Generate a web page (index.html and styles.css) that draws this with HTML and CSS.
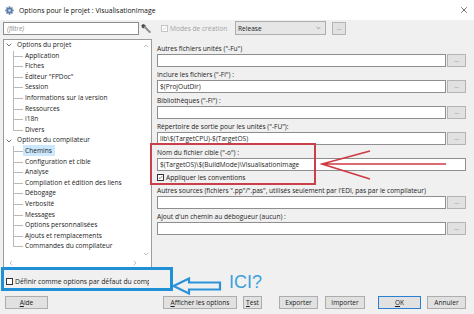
FILE: index.html
```html
<!DOCTYPE html>
<html lang="fr">
<head>
<meta charset="utf-8">
<title>Options pour le projet : VisualisationImage</title>
<link rel="stylesheet" href="styles.css">
</head>
<body>
<div class="dialog">
  <header class="titlebar">
    <svg class="gear" viewBox="0 0 10 10">
      <g fill="#5b7ea8">
        <rect x="4.1" y="0.3" width="1.8" height="9.4"/>
        <rect x="4.1" y="0.3" width="1.8" height="9.4" transform="rotate(45 5 5)"/>
        <rect x="4.1" y="0.3" width="1.8" height="9.4" transform="rotate(90 5 5)"/>
        <rect x="4.1" y="0.3" width="1.8" height="9.4" transform="rotate(135 5 5)"/>
        <circle cx="5" cy="5" r="3.4"/>
      </g>
      <circle cx="5" cy="5" r="1.5" fill="#c9d7e8"/>
    </svg>
    <span class="title">Options pour le projet : VisualisationImage</span>
    <svg class="close" viewBox="0 0 6 6"><path d="M0.3 0.3 L5.7 5.7 M5.7 0.3 L0.3 5.7" stroke="#333" stroke-width="0.7" fill="none"/></svg>
  </header>

  <div class="main">
    <aside class="left">
      <div class="filter">
        <div class="filter-input">(filtre)</div>
        <div class="filter-btn">
          <svg viewBox="0 0 12 12" class="brush">
            <path d="M1.5 3.2 C1.5 1.6 3.6 1 5 1.8 L6.6 3.4 L4 6 L2.2 4.6 Z" fill="#4a4a4a"/>
            <path d="M5.2 4.4 L10.6 9.8" stroke="#8e8e8e" stroke-width="2.2" stroke-linecap="round"/>
          </svg>
        </div>
      </div>

      <div class="tree">
        <div class="tree-list">
          <div class="parent"><svg class="chev" viewBox="0 0 6 4"><path d="M0.6 0.6 L3 3 L5.4 0.6" stroke="#555" stroke-width="0.8" fill="none"/></svg>Options du projet</div>
          <ul class="children">
            <li>Application</li>
            <li>Fiches</li>
            <li>Éditeur "FPDoc"</li>
            <li>Session</li>
            <li>Informations sur la version</li>
            <li>Ressources</li>
            <li>i18n</li>
            <li>Divers</li>
          </ul>
          <div class="parent"><svg class="chev" viewBox="0 0 6 4"><path d="M0.6 0.6 L3 3 L5.4 0.6" stroke="#555" stroke-width="0.8" fill="none"/></svg>Options du compilateur</div>
          <ul class="children">
            <li><span class="selected">Chemins</span></li>
            <li>Configuration et cible</li>
            <li>Analyse</li>
            <li>Compilation et édition des liens</li>
            <li>Débogage</li>
            <li>Verbosité</li>
            <li>Messages</li>
            <li>Options personnalisées</li>
            <li>Ajouts et remplacements</li>
            <li>Commandes du compilateur</li>
          </ul>
        </div>
        <div class="vscroll">
          <svg viewBox="0 0 6 4"><path d="M0.8 3.2 L3 1 L5.2 3.2" stroke="#b4b4b4" stroke-width="0.8" fill="none"/></svg>
          <svg viewBox="0 0 6 4"><path d="M0.8 0.8 L3 3 L5.2 0.8" stroke="#b4b4b4" stroke-width="0.8" fill="none"/></svg>
        </div>
        <div class="hscroll">
          <svg viewBox="0 0 4 6"><path d="M3.2 0.8 L1 3 L3.2 5.2" stroke="#b4b4b4" stroke-width="0.8" fill="none"/></svg>
          <svg viewBox="0 0 4 6"><path d="M0.8 0.8 L3 3 L0.8 5.2" stroke="#b4b4b4" stroke-width="0.8" fill="none"/></svg>
        </div>
      </div>

      <div class="default-row">
        <span class="cb"></span>
        <span class="default-text">Définir comme options par défaut du compilateur</span>
      </div>
    </aside>

    <section class="right">
      <div class="modes">
        <span class="cb cb-disabled"><svg viewBox="0 0 7 7"><path d="M1.3 3.6 L2.9 5.1 L5.8 1.6" stroke="#b8b8b8" stroke-width="0.8" fill="none"/></svg></span>
        <span class="modes-label">Modes de création</span>
        <div class="combo">
          <span>Release</span>
          <svg viewBox="0 0 6 4"><path d="M0.8 0.8 L3 3 L5.2 0.8" stroke="#777" stroke-width="0.8" fill="none"/></svg>
        </div>
        <div class="dots-btn modes-btn">...</div>
      </div>

      <div class="field">
        <div class="label">Autres fichiers unités ("-Fu")</div>
        <div class="input-row"><div class="input"></div><div class="dots-btn">...</div></div>
      </div>
      <div class="field">
        <div class="label">Inclure les fichiers ("-Fi") :</div>
        <div class="input-row"><div class="input">$(ProjOutDir)</div><div class="dots-btn">...</div></div>
      </div>
      <div class="field">
        <div class="label">Bibliothèques ("-Fl") :</div>
        <div class="input-row"><div class="input"></div><div class="dots-btn">...</div></div>
      </div>
      <div class="field">
        <div class="label">Répertoire de sortie pour les unités ("-FU"):</div>
        <div class="input-row"><div class="input">lib\$(TargetCPU)-$(TargetOS)</div><div class="dots-btn">...</div></div>
      </div>
      <div class="field">
        <div class="label">Nom du fichier cible ("-o") :</div>
        <div class="input-row"><div class="input">$(TargetOS)\$(BuildMode)\VisualisationImage</div></div>
        <div class="check-row">
          <span class="cb"><svg viewBox="0 0 7 7"><path d="M1.3 3.6 L2.9 5.1 L5.8 1.6" stroke="#222" stroke-width="0.8" fill="none"/></svg></span>
          <span>Appliquer les conventions</span>
        </div>
      </div>
      <div class="field">
        <div class="label">Autres sources (fichiers ".pp"/".pas", utilisés seulement par l'EDI, pas par le compilateur)</div>
        <div class="input-row"><div class="input"></div><div class="dots-btn">...</div></div>
      </div>
      <div class="field">
        <div class="label">Ajout d'un chemin au débogueur (aucun) :</div>
        <div class="input-row"><div class="input"></div><div class="dots-btn">...</div></div>
      </div>
    </section>
  </div>

  <footer class="buttons">
    <div class="btn btn-aide"><u>A</u>ide</div>
    <div class="btn btn-afficher"><u>A</u>fficher les options</div>
    <div class="btn btn-test"><u>T</u>est</div>
    <div class="btn btn-exporter">Exporter</div>
    <div class="btn btn-importer">Importer</div>
    <div class="btn btn-ok"><u>O</u>K</div>
    <div class="btn btn-annuler">Annuler</div>
  </footer>
</div>

<div class="red-box"></div>
<svg class="red-arrow" viewBox="0 0 128 32">
  <path d="M50 2 L2 15 L50 30 M2 15 L126 15" stroke="#cf3a44" stroke-width="1.6" fill="none"/>
</svg>
<div class="blue-box"></div>
<svg class="blue-arrow" viewBox="0 0 50 18">
  <path d="M1.5 9 L17 1.5 L17 5.5 L48 5.5 L48 12.5 L17 12.5 L17 16.5 Z" stroke="#2a93d8" stroke-width="2.2" fill="none" stroke-linejoin="miter"/>
</svg>
<div class="ici">ICI?</div>
</body>
</html>
```

FILE: styles.css
```css
* {
  box-sizing: border-box;
  margin: 0;
  padding: 0;
}

html, body {
  width: 474px;
  height: 314px;
}

body {
  position: relative;
  overflow: hidden;
  background: #f0f0f0;
  color: #1c1c1c;
  font-family: "Open Sans", "Noto Sans", sans-serif;
  font-size: 6.6px;
}

.dialog {
  display: flex;
  flex-direction: column;
  height: 314px;
}

/* ---------- title bar ---------- */
.titlebar {
  flex: none;
  height: 20px;
  background: #ffffff;
  display: flex;
  align-items: center;
  padding: 0 7px 0 5px;
}

.gear {
  width: 9px;
  height: 9px;
  margin-right: 5px;
}

.title {
  font-size: 6.9px;
  color: #111;
}

.close {
  width: 6px;
  height: 6px;
  margin-left: auto;
}

/* ---------- main ---------- */
.main {
  flex: 1;
  display: flex;
  padding-left: 3px;
  min-height: 0;
}

.left {
  width: 150px;
  display: flex;
  flex-direction: column;
}

.filter {
  display: flex;
  height: 13px;
  margin-top: 2px;
}

.filter-input {
  width: 136px;
  background: #fff;
  border: 1px solid #8c8c8c;
  color: #8a8a8a;
  font-style: italic;
  padding-left: 3px;
  line-height: 11px;
}

.filter-btn {
  width: 13px;
  display: flex;
  align-items: center;
  justify-content: center;
}

.brush {
  width: 11px;
  height: 11px;
}

/* ---------- tree ---------- */
.tree {
  margin-top: 4px;
  width: 149px;
  height: 229px;
  background: #fff;
  border: 1px solid #9c9c9c;
  display: grid;
  grid-template-columns: 1fr 10px;
  grid-template-rows: 1fr 8px;
}

.tree-list {
  overflow: hidden;
  white-space: nowrap;
}

.parent {
  height: 10.6px;
  line-height: 10.6px;
  display: flex;
  align-items: center;
  padding-left: 2px;
}

.chev {
  width: 6px;
  height: 4px;
  margin-right: 5px;
}

.children {
  list-style: none;
}

.children li {
  position: relative;
  height: 10.6px;
  line-height: 10.6px;
  padding-left: 21px;
}

.children li::before {
  content: "";
  position: absolute;
  left: 9px;
  top: 5px;
  width: 10px;
  border-top: 1px solid #b9b9b9;
}

.children li::after {
  content: "";
  position: absolute;
  left: 9px;
  top: 0;
  height: 100%;
  border-left: 1px solid #b9b9b9;
}

.children li:last-child::after {
  height: 5.5px;
}

.selected {
  background: #cce8ff;
  margin-left: -2px;
  padding: 1px 3px 1px 2px;
}

.vscroll {
  display: flex;
  flex-direction: column;
  justify-content: space-between;
  align-items: center;
  padding: 4px 0 3px;
}

.vscroll svg {
  width: 6px;
  height: 4px;
}

.hscroll {
  display: flex;
  justify-content: space-between;
  align-items: center;
  padding: 0 4px 0 5px;
}

.hscroll svg {
  width: 4px;
  height: 6px;
}

.default-row {
  margin-top: 7px;
  height: 12px;
  width: 146px;
  display: flex;
  align-items: center;
  padding-left: 3px;
  overflow: hidden;
  white-space: nowrap;
}

.default-text {
  margin-left: 2px;
  font-size: 6.75px;
}

/* ---------- checkbox ---------- */
.cb {
  flex: none;
  width: 7px;
  height: 7px;
  background: #fff;
  border: 0.8px solid #333;
  display: inline-flex;
}

.cb svg {
  width: 100%;
  height: 100%;
}

.cb-disabled {
  border-color: #c4c4c4;
}

/* ---------- right column ---------- */
.right {
  width: 309px;
  margin-left: 4px;
  padding-top: 1px;
  display: flex;
  flex-direction: column;
}

.modes {
  height: 14px;
  display: flex;
  align-items: center;
  margin-bottom: 9px;
}

.modes .cb {
  margin-left: 4px;
}

.modes-label {
  width: 65px;
  margin-left: 2px;
  color: #a2a2a2;
}

.combo {
  width: 91px;
  height: 14px;
  background: #e6e6e6;
  border: 1px solid #adadad;
  display: flex;
  align-items: center;
  justify-content: space-between;
  padding: 0 4px 0 2px;
  color: #222;
}

.combo svg {
  width: 5px;
  height: 4px;
}

.dots-btn {
  flex: none;
  width: 19px;
  height: 13px;
  margin-left: 1px;
  background: #e1e1e1;
  border: 1px solid #b4b4b4;
  color: #666;
  font-size: 6px;
  line-height: 11px;
  text-align: center;
}

.modes-btn {
  width: 14px;
  margin-left: 6px;
}

.field {
  margin-bottom: 3px;
}

.label {
  height: 10px;
  line-height: 10px;
  white-space: nowrap;
}

.input-row {
  display: flex;
  height: 13px;
}

.input {
  flex: 1;
  background: #fff;
  border: 1px solid #8e8e8e;
  padding-left: 2px;
  line-height: 11px;
  white-space: nowrap;
  overflow: hidden;
}

.check-row {
  height: 12px;
  display: flex;
  align-items: center;
}

.check-row span + span {
  margin-left: 2px;
}

/* ---------- bottom buttons ---------- */
.buttons {
  flex: none;
  height: 18px;
  display: flex;
  align-items: flex-start;
  padding-left: 5px;
}

.btn {
  height: 13px;
  background: #e1e1e1;
  border: 1px solid #adadad;
  text-align: center;
  line-height: 11px;
  color: #1c1c1c;
}

.btn u {
  text-decoration-thickness: 0.6px;
  text-underline-offset: 1px;
}

.btn-aide { width: 43px; }
.btn-afficher { width: 74px; margin-left: 115px; }
.btn-test { width: 19px; margin-left: 6px; }
.btn-exporter { width: 39px; margin-left: 17px; }
.btn-importer { width: 40px; margin-left: 7px; }
.btn-ok { width: 43px; margin-left: 13px; border-color: #2b7fd0; }
.btn-annuler { width: 39px; margin-left: 6px; }

/* ---------- annotations ---------- */
.red-box {
  position: absolute;
  left: 150px;
  top: 143px;
  width: 166px;
  height: 42px;
  border: 2px solid #c9404a;
}

.red-arrow {
  position: absolute;
  left: 320px;
  top: 149px;
  width: 128px;
  height: 32px;
}

.blue-box {
  position: absolute;
  left: 1px;
  top: 267px;
  width: 172px;
  height: 24px;
  border: 3px solid #1f8fd6;
}

.blue-arrow {
  position: absolute;
  left: 172px;
  top: 277px;
  width: 50px;
  height: 18px;
}

.ici {
  position: absolute;
  left: 229px;
  top: 272px;
  font-family: "Liberation Sans", Arial, sans-serif;
  font-size: 18px;
  line-height: 20px;
  color: #3b9fdc;
}
```
